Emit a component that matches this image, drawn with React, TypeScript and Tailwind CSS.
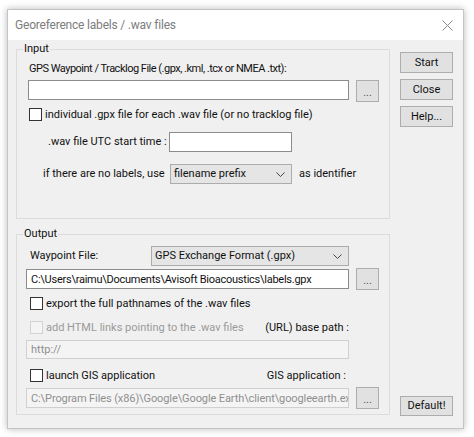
import React from 'react'

const Check = ({ disabled = false }: { disabled?: boolean }) => (
  <span
    className={
      disabled
        ? 'w-[13px] h-[13px] shrink-0 border border-[#d2d2d2] bg-[#f4f4f4]'
        : 'w-[13px] h-[13px] shrink-0 border border-[#333333] bg-white'
    }
  />
)

const Dots = () => (
  <button
    type="button"
    className="w-[23px] h-[22px] shrink-0 border border-[#adadad] bg-[#e1e1e1] pt-[3px] text-[11px] leading-[14px] text-[#555555]"
  >
    ...
  </button>
)

const Combo = ({ value, width }: { value: string; width: string }) => (
  <div
    className={`${width} h-[20px] shrink-0 flex items-center justify-between border border-[#acacac] bg-[#e5e5e5] pl-[3px] pr-[6px] text-[#111111]`}
  >
    <span>{value}</span>
    <svg width="9" height="5" viewBox="0 0 9 5">
      <path d="M0.5 0.5 L4.5 4.5 L8.5 0.5" fill="none" stroke="#444" strokeWidth="1" />
    </svg>
  </div>
)

const SideButton = ({ label }: { label: string }) => (
  <button
    type="button"
    className="w-[53px] h-[21px] border border-[#adadad] bg-[#e1e1e1] text-[#111111]"
  >
    {label}
  </button>
)

export default function App() {
  return (
    <div
      className="min-h-screen bg-white pt-[9px] pl-[7px] text-[11px] leading-[14px]"
      style={{ fontFamily: 'Roboto, "Liberation Sans", sans-serif' }}
    >
      <div className="w-[457px] h-[420px] flex flex-col border border-[#c4c4c4] bg-[#f0f0f0] shadow-[0_0_7px_rgba(0,0,0,0.28)]">
        {/* title bar */}
        <div className="h-[30px] shrink-0 flex items-center justify-between bg-white pl-[7px] pr-[10px]">
          <span className="text-[12px] tracking-[-0.2px] text-[#7d7d7d]">Georeference labels / .wav files</span>
          <svg width="11" height="11" viewBox="0 0 11 11">
            <path d="M0.5 0.5 L10.5 10.5 M10.5 0.5 L0.5 10.5" stroke="#8a8a8a" strokeWidth="1" />
          </svg>
        </div>

        <div className="flex-1 flex gap-[10px] pl-[8px] pr-[9px] pb-[11px] text-[#111111]">
          <div className="w-[374px] pt-[2px]">
            {/* Input */}
            <fieldset className="border border-[#dcdcdc] px-0">
              <legend className="ml-[6px] px-[1px] leading-[14px]">Input</legend>
              <div className="pl-[11px] pb-[34px]">
                <div className="mt-[6px] ml-[1px] h-[14px] tracking-[-0.5px]">
                  GPS Waypoint / Tracklog File (.gpx, .kml, .tcx or NMEA .txt):
                </div>
                <div className="mt-[4px] flex items-start gap-[7px]">
                  <input className="w-[321px] h-[20px] border border-[#8c8c8c] bg-white outline-none" />
                  <Dots />
                </div>
                <label className="mt-[6px] ml-[1px] h-[13px] flex items-center gap-[3px]">
                  <Check />
                  <span>individual .gpx file for each .wav file (or no tracklog file)</span>
                </label>
                <div className="mt-[11px] h-[20px] flex items-center">
                  <span className="ml-[20px] w-[121px]">.wav file UTC start time :</span>
                  <input className="w-[123px] h-[20px] border border-[#8c8c8c] bg-white outline-none" />
                </div>
                <div className="mt-[12px] h-[20px] flex items-center">
                  <span className="ml-[15px] w-[127px]">if there are no labels, use</span>
                  <Combo value="filename prefix" width="w-[122px]" />
                  <span className="ml-[7px]">as identifier</span>
                </div>
              </div>
            </fieldset>

            {/* Output */}
            <fieldset className="mt-[8px] border border-[#dcdcdc] px-0">
              <legend className="ml-[6px] px-[1px] leading-[14px]">Output</legend>
              <div className="pl-[9px] pb-[5px]">
                <div className="mt-[5px] h-[20px] flex items-center">
                  <span className="ml-[4px] w-[121px]">Waypoint File:</span>
                  <Combo value="GPS Exchange Format (.gpx)" width="w-[198px]" />
                </div>
                <div className="mt-[2px] h-[22px] flex items-center gap-[7px]">
                  <input
                    defaultValue="C:\Users\raimu\Documents\Avisoft Bioacoustics\labels.gpx"
                    className="w-[323px] h-[20px] border border-[#8c8c8c] bg-white pl-[4px] outline-none text-[#111111] tracking-[-0.25px]"
                  />
                  <Dots />
                </div>
                <label className="mt-[7px] ml-[4px] h-[13px] flex items-center gap-[3px]">
                  <Check />
                  <span>export the full pathnames of the .wav files</span>
                </label>
                <div className="mt-[11px] w-[323px] h-[13px] flex items-center justify-between">
                  <span className="ml-[4px] flex items-center gap-[3px] text-[#9a9a9a]">
                    <Check disabled />
                    <span>add HTML links pointing to the .wav files</span>
                  </span>
                  <span>(URL) base path :</span>
                </div>
                <input
                  disabled
                  defaultValue="http://"
                  className="block mt-[6px] w-[323px] h-[19px] border border-[#d0d0d0] bg-[#f4f4f4] pl-[4px] text-[#8f8f8f]"
                />
                <div className="mt-[10px] w-[323px] h-[13px] flex items-center justify-between">
                  <label className="ml-[4px] flex items-center gap-[3px]">
                    <Check />
                    <span>launch GIS application</span>
                  </label>
                  <span className="pr-[3px]">GIS application :</span>
                </div>
                <div className="mt-[5px] h-[22px] flex items-center gap-[7px]">
                  <input
                    disabled
                    defaultValue="C:\Program Files (x86)\Google\Google Earth\client\googleearth.exe"
                    className="w-[323px] h-[20px] border border-[#d0d0d0] bg-[#f4f4f4] pl-[4px] text-[#8f8f8f] tracking-[-0.1px]"
                  />
                  <Dots />
                </div>
              </div>
            </fieldset>
          </div>

          <div className="w-[53px] pt-[12px] flex flex-col">
            <div className="flex flex-col gap-[6px]">
              <SideButton label="Start" />
              <SideButton label="Close" />
              <SideButton label="Help..." />
            </div>
            <button
              type="button"
              className="mt-auto mb-[1px] w-[53px] h-[20px] border border-[#adadad] bg-[#e1e1e1] text-[#111111]"
            >
              Default!
            </button>
          </div>
        </div>
      </div>
    </div>
  )
}
